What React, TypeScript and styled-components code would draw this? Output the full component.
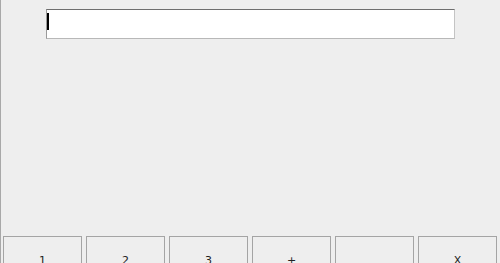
import React from "react";
import styled, { createGlobalStyle } from "styled-components";

const GlobalStyle = createGlobalStyle`
  html, body {
    margin: 0;
    padding: 0;
    background: #eeeeee;
    overflow: hidden;
  }
`;

const Frame = styled.div`
  width: 500px;
  height: 263px;
  box-sizing: border-box;
  border-left: 1px solid #a8a8a8;
  background: #eeeeee;
  display: flex;
  flex-direction: column;
  overflow: hidden;
  font-family: "DejaVu Sans", sans-serif;
`;

const InputRow = styled.div`
  padding: 9px 0 0 45px;
`;

const Field = styled.input`
  box-sizing: border-box;
  width: 409px;
  height: 30px;
  margin: 0;
  padding: 0 0 0 1px;
  border-style: solid;
  border-width: 1px;
  border-color: #6e6e6e #c4c4c4 #b8b8b8 #9a9a9a;
  background: #ffffff;
  font-family: "DejaVu Sans", sans-serif;
  font-size: 13px;
  outline: none;
`;

const Caret = styled.span`
  position: absolute;
  left: 47px;
  top: 13px;
  width: 2px;
  height: 17px;
  background: #000;
`;

const Spacer = styled.div`
  flex: 1;
`;

const Keys = styled.div`
  display: flex;
  gap: 4px;
  padding: 0 0 0 2px;
  height: 27px;
  align-items: flex-start;
`;

const Key = styled.button`
  box-sizing: border-box;
  width: 79px;
  height: 48px;
  flex: none;
  margin: 0;
  padding: 0;
  border: 1px solid #a4a4a4;
  background: #eeeeee;
  color: #222;
  font-family: "DejaVu Sans", sans-serif;
  font-size: 11px;
  display: flex;
  align-items: center;
  justify-content: center;
`;

const labels = ["1", "2", "3", "+", "", "X"];

export default function App() {
  return (
    <>
      <GlobalStyle />
      <Frame>
        <InputRow>
          <Field type="text" />
        </InputRow>
        <Caret />
        <Spacer />
        <Keys>
          {labels.map((l, i) => (
            <Key key={i}>{l}</Key>
          ))}
        </Keys>
      </Frame>
    </>
  );
}
